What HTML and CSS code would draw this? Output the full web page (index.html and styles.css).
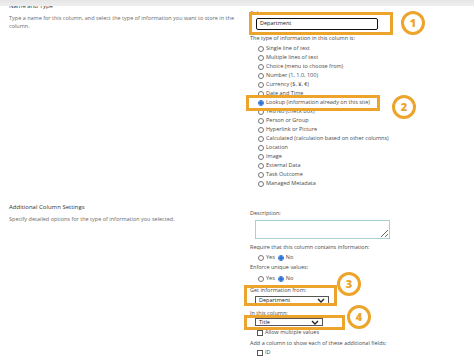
FILE: index.html
```html
<!DOCTYPE html>
<html lang="en">
<head>
  <meta charset="UTF-8">
  <title>Create Column</title>
  <link rel="stylesheet" href="styles.css">
</head>
<body>
  <div class="top-bar"></div>
  <div class="page">
    <!-- Name and Type -->
    <div class="section first">
      <div class="info">
        <div class="info-title">Name and Type</div>
        <div class="info-text">Type a name for this column, and select the type of information you want to store in the column.</div>
      </div>
      <div class="fields">
        <div class="label">Column name:</div>
        <div class="name-input">Department</div>
        <div class="label gap4">The type of information in this column is:</div>
        <ul class="choices">
          <li><span class="radio"></span>Single line of text</li>
          <li><span class="radio"></span>Multiple lines of text</li>
          <li><span class="radio"></span>Choice (menu to choose from)</li>
          <li><span class="radio"></span>Number (1, 1.0, 100)</li>
          <li><span class="radio"></span>Currency ($, ¥, €)</li>
          <li><span class="radio"></span>Date and Time</li>
          <li><span class="radio on"></span>Lookup (information already on this site)</li>
          <li><span class="radio"></span>Yes/No (check box)</li>
          <li><span class="radio"></span>Person or Group</li>
          <li><span class="radio"></span>Hyperlink or Picture</li>
          <li><span class="radio"></span>Calculated (calculation based on other columns)</li>
          <li><span class="radio"></span>Location</li>
          <li><span class="radio"></span>Image</li>
          <li><span class="radio"></span>External Data</li>
          <li><span class="radio"></span>Task Outcome</li>
          <li><span class="radio"></span>Managed Metadata</li>
        </ul>
      </div>
    </div>

    <!-- Additional Column Settings -->
    <div class="section second">
      <div class="info">
        <div class="info-title">Additional Column Settings</div>
        <div class="info-text">Specify detailed options for the type of information you selected.</div>
      </div>
      <div class="fields">
        <div class="label">Description:</div>
        <textarea class="desc"></textarea>
        <div class="label m4">Require that this column contains information:</div>
        <div class="yesno m1"><span class="radio"></span>Yes <span class="radio on"></span>No</div>
        <div class="label m1">Enforce unique values:</div>
        <div class="yesno m2"><span class="radio"></span>Yes <span class="radio on"></span>No</div>
        <div class="label m3">Get information from:</div>
        <div class="select dept">Department
          <svg class="chev" viewBox="0 0 8 5" width="8" height="5"><path d="M1 1l3 3 3-3" fill="none" stroke="#222" stroke-width="1.4"/></svg>
        </div>
        <div class="label m5">In this column:</div>
        <div class="select title">Title
          <svg class="chev" viewBox="0 0 8 5" width="8" height="5"><path d="M1 1l3 3 3-3" fill="none" stroke="#222" stroke-width="1.4"/></svg>
        </div>
        <div class="check-row m2"><span class="box"></span>Allow multiple values</div>
        <div class="label m2">Add a column to show each of these additional fields:</div>
        <div class="check-row"><span class="box"></span>ID</div>
      </div>
    </div>

    <!-- annotations -->
    <div class="mark box1"></div>
    <div class="num n1">1</div>
    <div class="mark box2"></div>
    <div class="num n2">2</div>
    <div class="mark box3"></div>
    <div class="num n3">3</div>
    <div class="mark box4"></div>
    <div class="num n4">4</div>
  </div>
</body>
</html>
```

FILE: styles.css
```css
:root {
  --orange: #eca42c;
  --text: #4a4a4a;
  --muted: #6a6a6a;
  --blue: #2b6fd6;
}
body {
  margin: 0;
  background: #fff;
  font-family: 'Open Sans', 'Noto Sans', sans-serif;
  font-size: 5.5px;
  color: var(--text);
  overflow: hidden;
}
.top-bar {
  position: fixed;
  top: 0;
  left: 0;
  right: 0;
  height: 6px;
  background: linear-gradient(#e6e6e6, #efefef);
  z-index: 5;
}
.page {
  position: relative;
  width: 474px;
  height: 356px;
}
.section {
  display: grid;
  grid-template-columns: 250px 1fr;
}
.info {
  padding-left: 9px;
  padding-right: 14px;
}
.first .info { padding-top: 2px; }
.second .info { padding-top: 3px; }
.fields { padding-top: 9px; }
.first { padding-bottom: 12px; }
.info-title {
  font-size: 6px;
  line-height: 9px;
  color: #333;
}
.info-text {
  margin-top: 3px;
  line-height: 8px;
  color: var(--muted);
}
.label {
  line-height: 9px;
  height: 9px;
  white-space: nowrap;
}
.gap4, .m4 { margin-top: 4px; }
.m1 { margin-top: 1px; }
.m2 { margin-top: 2px; }
.m3 { margin-top: 3px; }
.m5 { margin-top: 5px; }
.name-input {
  margin-left: 6px;
  width: 122px;
  height: 12px;
  box-sizing: border-box;
  border: 1.5px solid #111;
  border-radius: 2px;
  padding-left: 3px;
  line-height: 9px;
  font-size: 5.5px;
  color: #222;
}
.choices {
  list-style: none;
  margin: 1px 0 0 0;
  padding: 0 0 0 8px;
}
.choices li {
  height: 9px;
  line-height: 9px;
  display: flex;
  align-items: center;
  white-space: nowrap;
}
.radio {
  display: inline-block;
  width: 6px;
  height: 6px;
  box-sizing: border-box;
  border: 0.8px solid #777;
  border-radius: 50%;
  margin-right: 2px;
  flex: none;
  vertical-align: -1px;
}
.radio.on {
  border-color: var(--blue);
  background: radial-gradient(circle, var(--blue) 0 55%, #fff 62%);
}
.desc {
  display: block;
  margin: 2px 0 0 5px;
  width: 135px;
  height: 19px;
  box-sizing: border-box;
  border: 1px solid #a9d0d4;
  padding: 0;
  resize: both;
  font: inherit;
}
.yesno {
  height: 9px;
  line-height: 9px;
  padding-left: 8px;
  display: flex;
  align-items: center;
}
.yesno .radio.on { margin-left: 3px; }
.select {
  position: relative;
  margin-left: 5px;
  height: 8px;
  box-sizing: border-box;
  border: 1px solid #555;
  line-height: 6px;
  padding-left: 3px;
  color: #222;
}
.select.dept { margin-top: 1px; width: 74px; }
.select.title { width: 68px; }
.chev {
  position: absolute;
  right: 3px;
  top: 0.5px;
}
.check-row {
  height: 9px;
  line-height: 9px;
  padding-left: 7px;
  display: flex;
  align-items: center;
}
.box {
  width: 6px;
  height: 6px;
  box-sizing: border-box;
  border: 0.8px solid #555;
  margin-right: 2px;
}
/* annotation overlays */
.mark {
  position: absolute;
  box-sizing: border-box;
  border: 3px solid var(--orange);
}
.box1 { left: 249px; top: 12px; width: 144px; height: 23px; }
.box2 { left: 246px; top: 95px; width: 134px; height: 16px; }
.box3 { left: 244px; top: 285px; width: 93px; height: 21px; }
.box4 { left: 244px; top: 315px; width: 101px; height: 15px; }
.num {
  position: absolute;
  width: 24px;
  height: 24px;
  box-sizing: border-box;
  border: 3px solid var(--orange);
  border-radius: 50%;
  background: #fff;
  color: var(--orange);
  font-family: 'Open Sans', sans-serif;
  font-weight: 800;
  font-size: 11px;
  line-height: 18px;
  text-align: center;
}
.n1 { left: 401px; top: 11px; }
.n2 { left: 392px; top: 95px; }
.n3 { left: 337px; top: 272px; }
.n4 { left: 347px; top: 305px; }
```
